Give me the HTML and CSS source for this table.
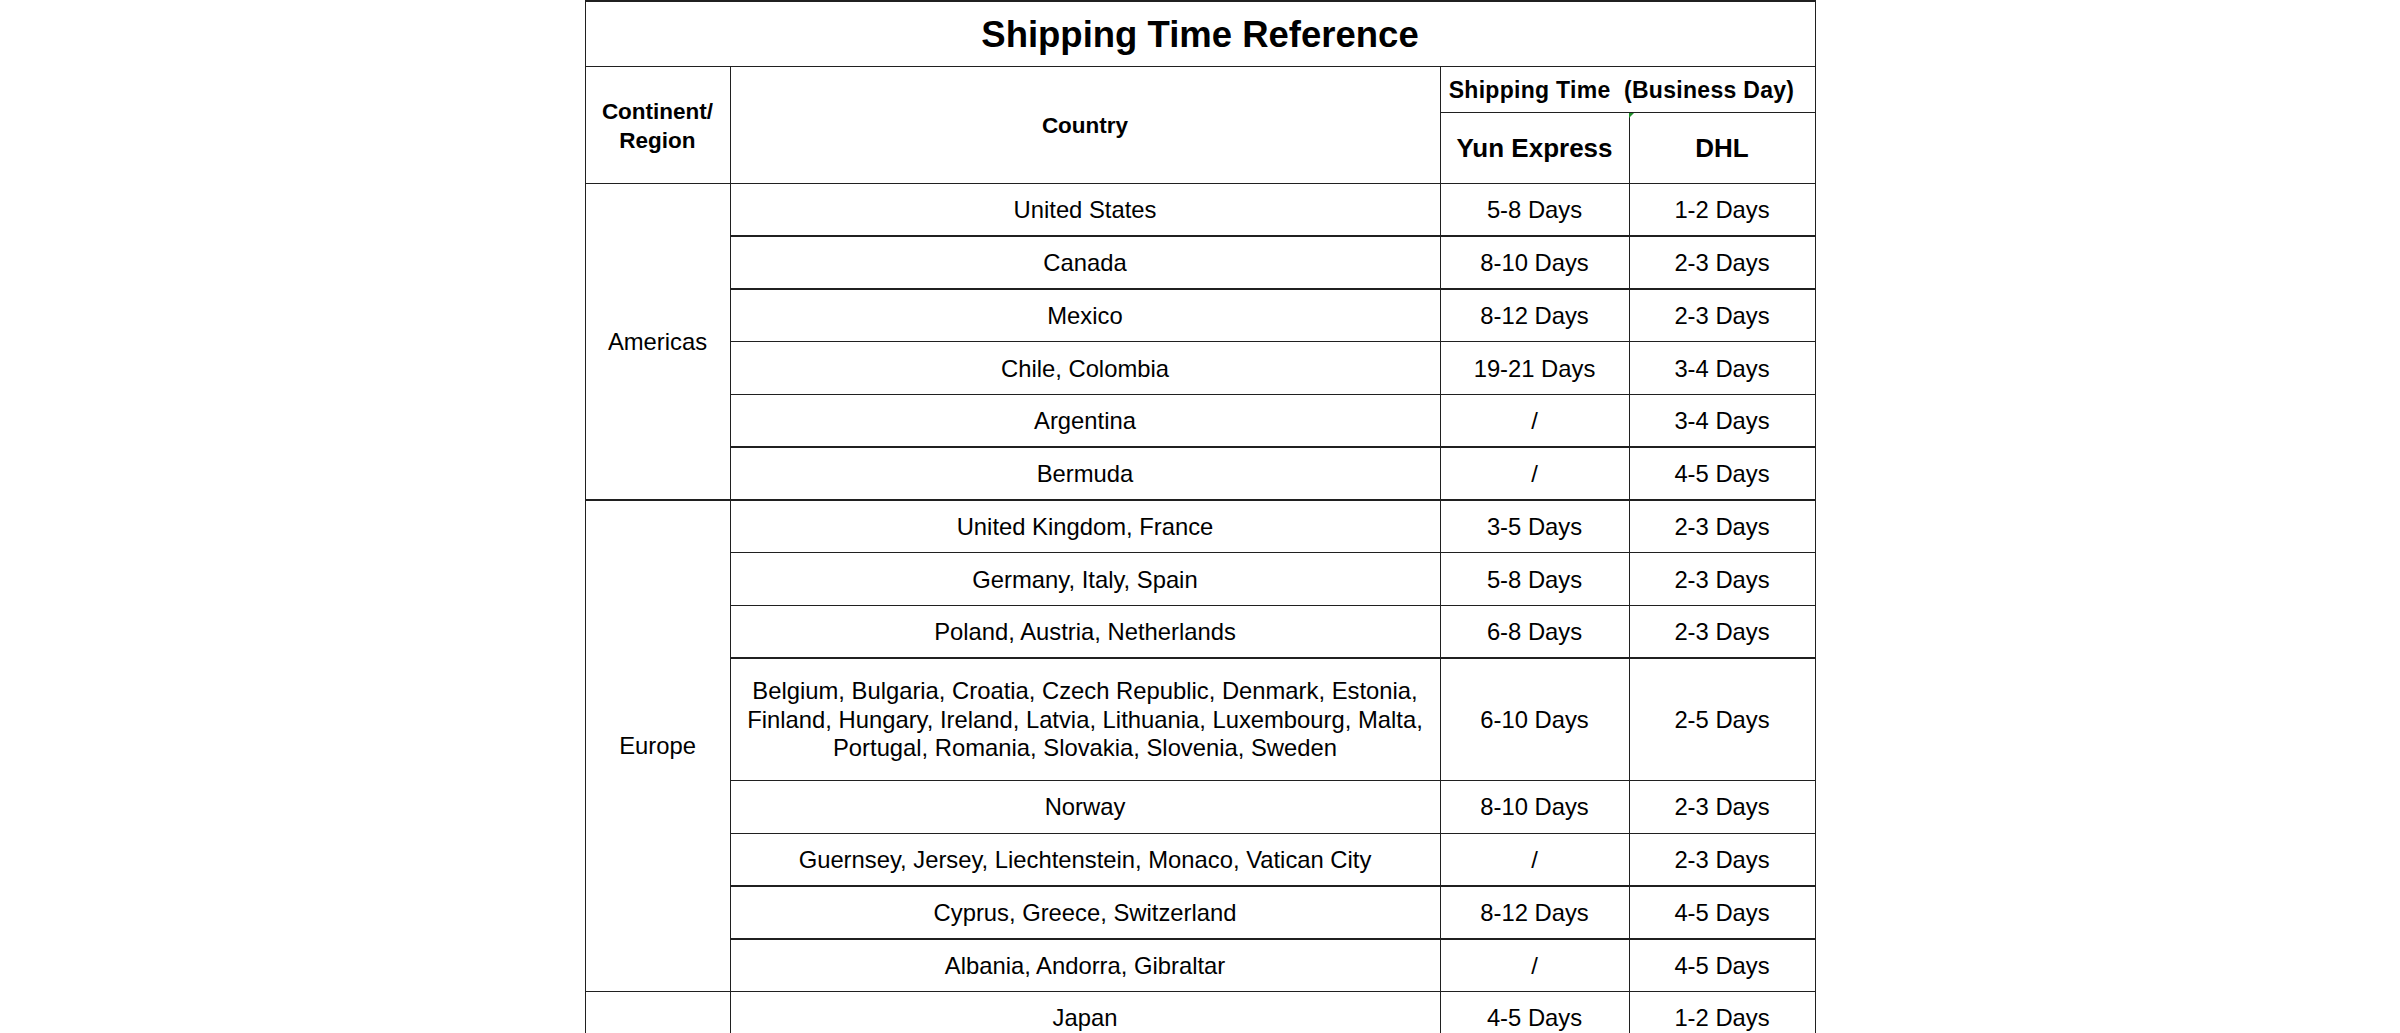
FILE: index.html
```html
<!DOCTYPE html>
<html lang="en">
<head>
<meta charset="utf-8">
<title>Shipping Time Reference</title>
<link rel="stylesheet" href="styles.css">
</head>
<body>
<div class="sheet">
  <div class="cell title">Shipping Time Reference</div>

  <div class="cell head region-head">Continent/<br>Region</div>
  <div class="cell head country-head">Country</div>
  <div class="cell head time-head">Shipping Time&nbsp;&nbsp;(Business Day)</div>
  <div class="cell carrier">Yun Express</div>
  <div class="cell carrier flagged">DHL</div>

  <div class="cell region americas">Americas</div>
  <div class="cell">United States</div><div class="cell">5-8 Days</div><div class="cell">1-2 Days</div>
  <div class="cell">Canada</div><div class="cell">8-10 Days</div><div class="cell">2-3 Days</div>
  <div class="cell">Mexico</div><div class="cell">8-12 Days</div><div class="cell">2-3 Days</div>
  <div class="cell">Chile, Colombia</div><div class="cell">19-21 Days</div><div class="cell">3-4 Days</div>
  <div class="cell">Argentina</div><div class="cell">/</div><div class="cell">3-4 Days</div>
  <div class="cell">Bermuda</div><div class="cell">/</div><div class="cell">4-5 Days</div>

  <div class="cell region europe">Europe</div>
  <div class="cell">United Kingdom, France</div><div class="cell">3-5 Days</div><div class="cell">2-3 Days</div>
  <div class="cell">Germany, Italy, Spain</div><div class="cell">5-8 Days</div><div class="cell">2-3 Days</div>
  <div class="cell">Poland, Austria, Netherlands</div><div class="cell">6-8 Days</div><div class="cell">2-3 Days</div>
  <div class="cell multi">Belgium, Bulgaria, Croatia, Czech Republic, Denmark, Estonia,<br>Finland, Hungary, Ireland, Latvia, Lithuania, Luxembourg, Malta,<br>Portugal, Romania, Slovakia, Slovenia, Sweden</div><div class="cell">6-10 Days</div><div class="cell">2-5 Days</div>
  <div class="cell">Norway</div><div class="cell">8-10 Days</div><div class="cell">2-3 Days</div>
  <div class="cell">Guernsey, Jersey, Liechtenstein, Monaco, Vatican City</div><div class="cell">/</div><div class="cell">2-3 Days</div>
  <div class="cell">Cyprus, Greece, Switzerland</div><div class="cell">8-12 Days</div><div class="cell">4-5 Days</div>
  <div class="cell">Albania, Andorra, Gibraltar</div><div class="cell">/</div><div class="cell">4-5 Days</div>

  <div class="cell region"></div>
  <div class="cell">Japan</div><div class="cell">4-5 Days</div><div class="cell">1-2 Days</div>
</div>
</body>
</html>
```

FILE: styles.css
```css
html, body {
  margin: 0;
  padding: 0;
  background: #ffffff;
}

body {
  font-family: "Liberation Sans", Arial, sans-serif;
  color: #000000;
}

.sheet {
  display: grid;
  width: max-content;
  margin: 0 auto;
  grid-template-columns: 144px 709px 188px 185px;
  grid-template-rows: 64.45px 44.1px 69.7px repeat(9, 51.25px) 120.9px repeat(5, 51.25px);
  column-gap: 1px;
  row-gap: 1.5px;
  padding: 1.5px 1px;
  background: #202020;
}

.cell {
  background: #ffffff;
  display: flex;
  align-items: center;
  justify-content: center;
  text-align: center;
  font-size: 23.8px;
  line-height: normal;
  white-space: nowrap;
  padding-top: 1px;
}

.title {
  grid-column: 1 / -1;
  font-size: 36.5px;
  font-weight: bold;
  padding-top: 3px;
}

.head {
  font-size: 22.5px;
  font-weight: bold;
  line-height: 29.3px;
  padding-top: 2px;
}

.region-head,
.country-head {
  grid-row: span 2;
}

.time-head {
  grid-column: span 2;
  font-size: 23px;
  letter-spacing: 0.3px;
  padding-right: 12px;
}

.carrier {
  font-size: 26px;
  font-weight: bold;
  padding-top: 2px;
}

.flagged {
  position: relative;
}

.flagged::before {
  content: "";
  position: absolute;
  top: 0;
  left: -1px;
  width: 0;
  height: 0;
  border-top: 5px solid #1f8f2a;
  border-right: 5px solid transparent;
}

.americas {
  grid-row: span 6;
}

.europe {
  grid-row: span 8;
}

.multi {
  line-height: 28.8px;
}
```
